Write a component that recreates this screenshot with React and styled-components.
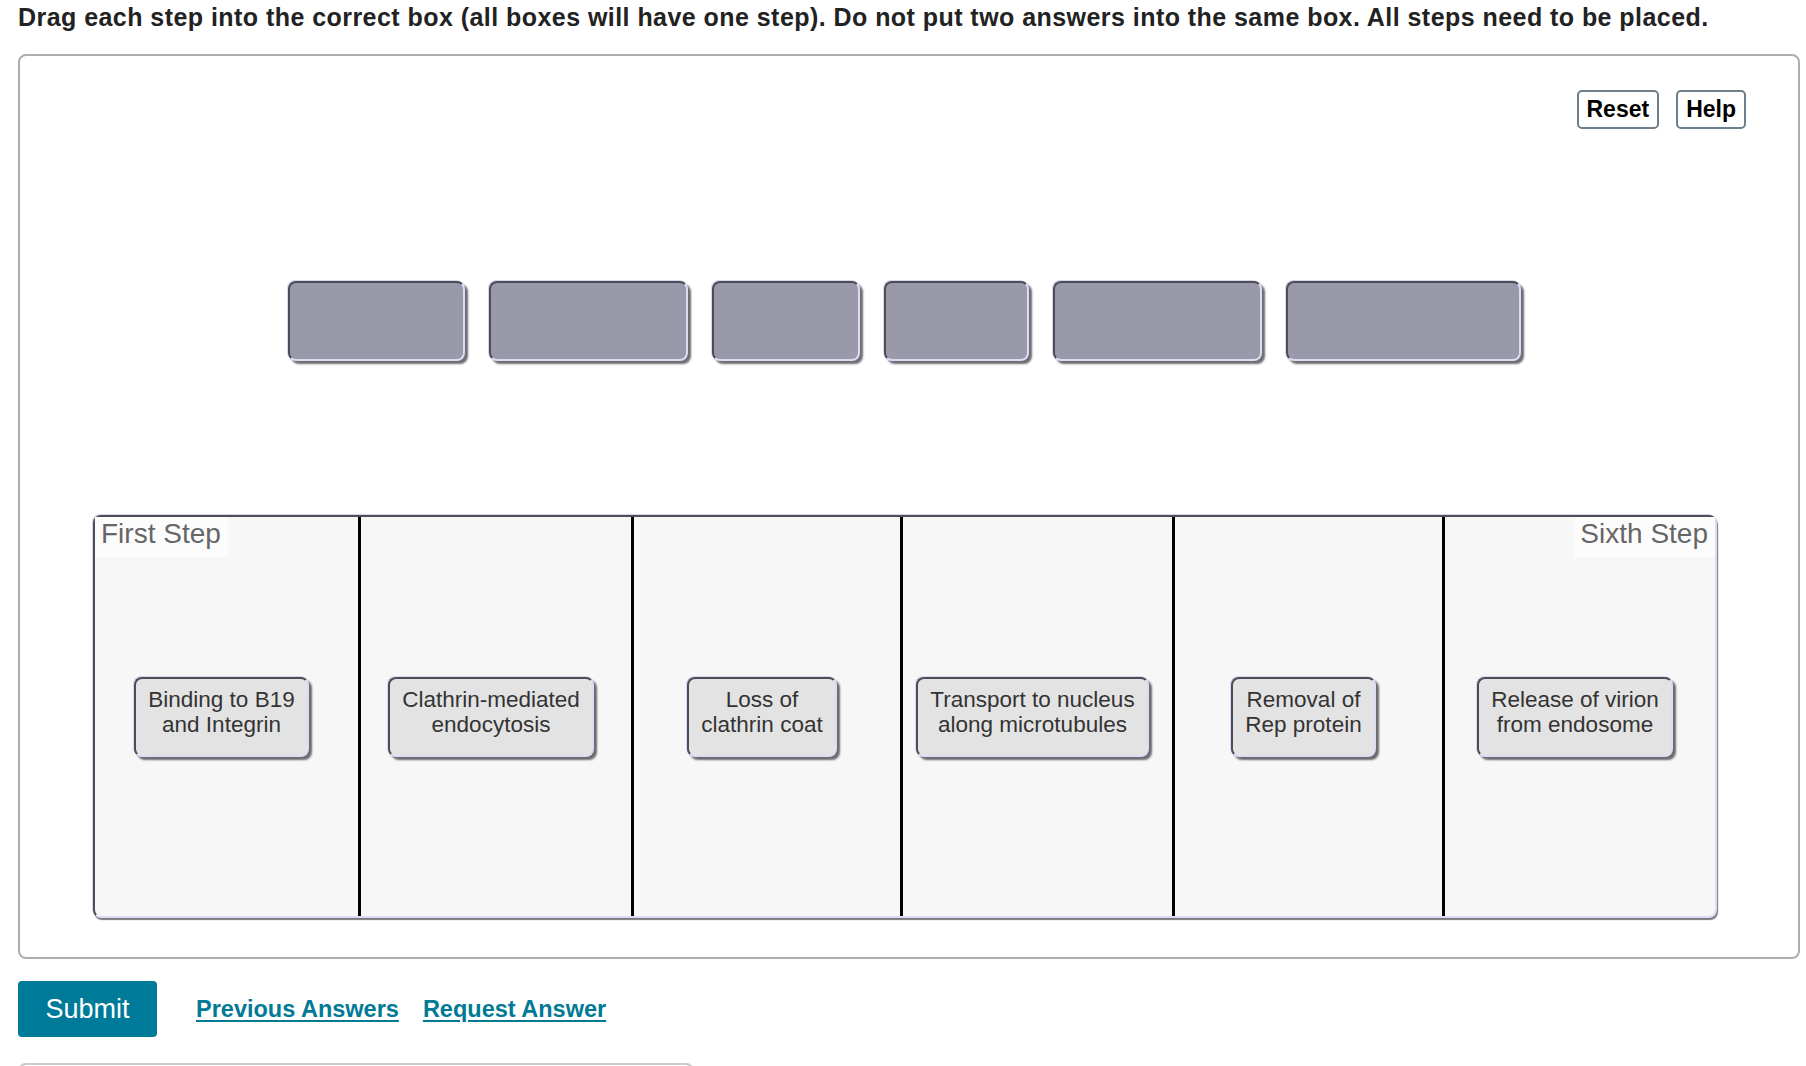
import React from 'react'
import styled, { createGlobalStyle, css } from 'styled-components'

const GlobalStyle = createGlobalStyle`
  body {
    margin: 0;
    background: #fff;
    font-family: "Liberation Sans", Arial, Helvetica, sans-serif;
  }
`

// raised, bevelled look shared by the drop slots, the chips and the board
const bevel = css`
  border: 2px solid #4d4d58;
  border-right-color: #dcdcf4;
  border-bottom-color: #dcdcf4;
  border-radius: 8px;
  box-shadow: -1px -1px 0 #d6d6ef, 3px 3px 2px rgba(30, 30, 40, 0.65);
`

const Page = styled.div`
  padding: 3px 6px 0 18px;
`

const Heading = styled.h1`
  margin: 0;
  font-size: 25px;
  letter-spacing: 0.45px;
  line-height: 28px;
  font-weight: bold;
  color: #222;
`

const Panel = styled.div`
  margin-top: 23px;
  border: 2px solid #adadad;
  border-radius: 8px;
  padding: 34px 0 39px;
`

const Toolbar = styled.div`
  display: flex;
  justify-content: flex-end;
  gap: 17px;
  padding-right: 52px;
`

const ToolButton = styled.button`
  height: 39px;
  padding: 0 8px;
  background: #fff;
  border: 2px solid #6e7f89;
  border-radius: 5px;
  font-family: inherit;
  font-size: 23px;
  font-weight: bold;
  color: #000;
`

const DropRow = styled.div`
  display: flex;
  justify-content: center;
  gap: 24px;
  margin-top: 152px;
  padding-right: 9px;
`

const DropSlot = styled.div`
  ${bevel}
  box-sizing: border-box;
  width: ${(p) => p.$w}px;
  height: 80px;
  background: #9a99a9;
`

const Board = styled.div`
  ${bevel}
  box-shadow: -1px -1px 0 #d6d6ef, 1px 2px 1px rgba(30, 30, 40, 0.6);
  position: relative;
  box-sizing: border-box;
  margin: 154px 0 0 73px;
  width: 1624px;
  height: 403px;
  background: #f7f7f7;
  display: grid;
  grid-template-columns: 263px 273px 269px 272px 270px 273px;
`

const Column = styled.div`
  display: flex;
  align-items: center;
  justify-content: center;
  padding-right: 10px;
  & + & {
    border-left: 3px solid #000;
  }
`

const Caption = styled.div`
  position: absolute;
  top: 0;
  ${(p) => (p.$right ? 'right: 0;' : 'left: 0;')}
  padding: 2px 7px 8px 6px;
  background: #fcfcfc;
  color: #666;
  font-size: 28px;
  line-height: 30px;
`

const Chip = styled.div`
  ${bevel}
  padding: 8px 12px 18px;
  background: #e3e3e3;
  color: #333;
  font-size: 22.5px;
  line-height: 25px;
  text-align: center;
  white-space: nowrap;
`

const Footer = styled.div`
  display: flex;
  align-items: center;
  gap: 24px;
  margin-top: 22px;
`

const SubmitButton = styled.button`
  width: 139px;
  height: 56px;
  margin-right: 15px;
  border: none;
  border-radius: 4px;
  background: #007a99;
  color: #fff;
  font-family: inherit;
  font-size: 27px;
`

const TextLink = styled.a`
  color: #007a96;
  font-size: 23.5px;
  font-weight: bold;
  text-decoration: underline;
  text-decoration-thickness: 2px;
  text-underline-offset: 3px;
  cursor: pointer;
`

const NextCard = styled.div`
  margin-top: 26px;
  width: 672px;
  height: 40px;
  border: 2px solid #cacaca;
  border-bottom: none;
  border-radius: 8px 8px 0 0;
`

const slots = [177, 199, 148, 145, 209, 235]

const steps = [
  ['Binding to B19', 'and Integrin'],
  ['Clathrin-mediated', 'endocytosis'],
  ['Loss of', 'clathrin coat'],
  ['Transport to nucleus', 'along microtubules'],
  ['Removal of', 'Rep protein'],
  ['Release of virion', 'from endosome'],
]

export default function App() {
  return (
    <Page>
      <GlobalStyle />
      <Heading>
        Drag each step into the correct box (all boxes will have one step). Do not put two answers into the same box. All steps need to be placed.
      </Heading>
      <Panel>
        <Toolbar>
          <ToolButton>Reset</ToolButton>
          <ToolButton>Help</ToolButton>
        </Toolbar>
        <DropRow>
          {slots.map((w, i) => (
            <DropSlot key={i} $w={w} />
          ))}
        </DropRow>
        <Board>
          <Caption>First Step</Caption>
          <Caption $right>Sixth Step</Caption>
          {steps.map(([a, b]) => (
            <Column key={a}>
              <Chip>
                {a}
                <br />
                {b}
              </Chip>
            </Column>
          ))}
        </Board>
      </Panel>
      <Footer>
        <SubmitButton>Submit</SubmitButton>
        <TextLink>Previous Answers</TextLink>
        <TextLink>Request Answer</TextLink>
      </Footer>
      <NextCard />
    </Page>
  )
}
